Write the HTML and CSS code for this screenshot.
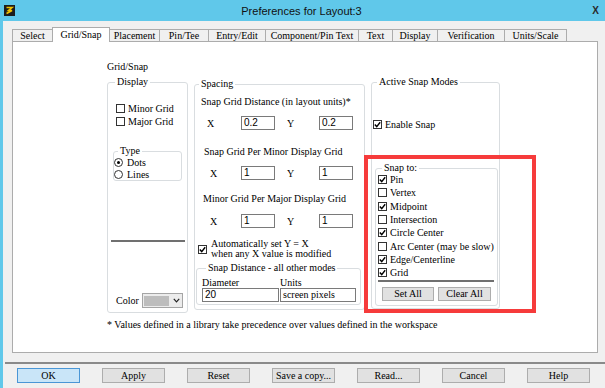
FILE: index.html
```html
<!DOCTYPE html>
<html lang="en">
<head>
    <meta charset="UTF-8">
    <title>Preferences for Layout:3</title>
    <link rel="stylesheet" href="styles.css">
</head>
<body>
<div class="window">
    <div class="titlebar">
        <svg class="app-icon" width="11" height="11" viewBox="0 0 11 11"><rect width="11" height="11" fill="#1c1c1c"/><path d="M2.5 2.5H8L4.5 5.5H8L2.5 8.5" fill="none" stroke="#f2c200" stroke-width="1.6"/></svg>
        <span class="title">Preferences for Layout:3</span>
        <span class="close">X</span>
    </div>

    <div class="client">
        <div class="tabs">
            <span class="tab">Select</span>
            <span class="tab current">Grid/Snap</span>
            <span class="tab">Placement</span>
            <span class="tab">Pin/Tee</span>
            <span class="tab">Entry/Edit</span>
            <span class="tab">Component/Pin Text</span>
            <span class="tab">Text</span>
            <span class="tab">Display</span>
            <span class="tab">Verification</span>
            <span class="tab">Units/Scale</span>
        </div>

        <div class="panel">
            <div class="page-title">Grid/Snap</div>

            <div class="groups">
                <!-- Display -->
                <fieldset class="display">
                    <legend>Display</legend>
                    <div class="grid-opts">
                        <div class="check-row"><span class="cb"></span>Minor Grid</div>
                        <div class="check-row"><span class="cb"></span>Major Grid</div>
                    </div>
                    <fieldset class="type">
                        <legend>Type</legend>
                        <div class="radio-row"><span class="rb on"></span>Dots</div>
                        <div class="radio-row"><span class="rb"></span>Lines</div>
                    </fieldset>
                    <div class="rule display-rule"></div>
                    <div class="color-row">
                        <span>Color</span>
                        <span class="combo"><span class="swatch"></span><svg width="7" height="5" viewBox="0 0 7 5"><path d="M0.8 0.8 3.5 3.8 6.2 0.8" fill="none" stroke="#222" stroke-width="1.2"/></svg></span>
                    </div>
                </fieldset>

                <!-- Spacing -->
                <fieldset class="spacing">
                    <legend>Spacing</legend>
                    <div class="hint h1">Snap Grid Distance (in layout units)*</div>
                    <div class="xy r1">
                        <span class="lbl">X</span><span class="field">0.2</span>
                        <span class="lbl y">Y</span><span class="field">0.2</span>
                    </div>
                    <div class="hint h2">Snap Grid Per Minor Display Grid</div>
                    <div class="xy r2">
                        <span class="lbl">X</span><span class="field">1</span>
                        <span class="lbl y">Y</span><span class="field">1</span>
                    </div>
                    <div class="hint h3">Minor Grid Per Major Display Grid</div>
                    <div class="xy r3">
                        <span class="lbl">X</span><span class="field">1</span>
                        <span class="lbl y">Y</span><span class="field">1</span>
                    </div>
                    <div class="auto">
                        <span class="cb on"><svg viewBox="0 0 7 7"><path d="M0.8 3.6 2.7 5.6 6.2 1.2"/></svg></span>
                        <span>Automatically set Y = X<br>when any X value is modified</span>
                    </div>
                    <fieldset class="snapdist">
                        <legend>Snap Distance - all other modes</legend>
                        <div class="cols">
                            <span class="cap">Diameter</span><span class="cap">Units</span>
                            <span class="field wide">20</span><span class="field wide serif">screen pixels</span>
                        </div>
                    </fieldset>
                </fieldset>

                <!-- Active Snap Modes -->
                <fieldset class="modes">
                    <legend>Active Snap Modes</legend>
                    <div class="check-row"><span class="cb on"><svg viewBox="0 0 7 7"><path d="M0.8 3.6 2.7 5.6 6.2 1.2"/></svg></span>Enable Snap</div>
                    <fieldset class="snap-to">
                        <legend>Snap to:</legend>
                        <div class="check-row"><span class="cb on"><svg viewBox="0 0 7 7"><path d="M0.8 3.6 2.7 5.6 6.2 1.2"/></svg></span>Pin</div>
                        <div class="check-row"><span class="cb"></span>Vertex</div>
                        <div class="check-row"><span class="cb on"><svg viewBox="0 0 7 7"><path d="M0.8 3.6 2.7 5.6 6.2 1.2"/></svg></span>Midpoint</div>
                        <div class="check-row"><span class="cb"></span>Intersection</div>
                        <div class="check-row"><span class="cb on"><svg viewBox="0 0 7 7"><path d="M0.8 3.6 2.7 5.6 6.2 1.2"/></svg></span>Circle Center</div>
                        <div class="check-row"><span class="cb"></span>Arc Center (may be slow)</div>
                        <div class="check-row"><span class="cb on"><svg viewBox="0 0 7 7"><path d="M0.8 3.6 2.7 5.6 6.2 1.2"/></svg></span>Edge/Centerline</div>
                        <div class="check-row"><span class="cb on"><svg viewBox="0 0 7 7"><path d="M0.8 3.6 2.7 5.6 6.2 1.2"/></svg></span>Grid</div>
                        <div class="rule snap-rule"></div>
                        <div class="snap-buttons">
                            <button class="btn set">Set All</button>
                            <button class="btn clear">Clear All</button>
                        </div>
                    </fieldset>
                </fieldset>
            </div>

            <p class="note">* Values defined in a library take precedence over values defined in the workspace</p>

            <!-- red highlight drawn over the dialog -->
            <div class="annotation"></div>
        </div>

        <div class="separator"></div>

        <div class="actions">
            <button class="btn big default">OK</button>
            <button class="btn big">Apply</button>
            <button class="btn big">Reset</button>
            <button class="btn big">Save a copy...</button>
            <button class="btn big">Read...</button>
            <button class="btn big">Cancel</button>
            <button class="btn big">Help</button>
        </div>
    </div>
</div>
</body>
</html>
```

FILE: styles.css
```css
* {box-sizing: border-box;}
body {margin: 0; background: #f0f0f0; font-family: "Liberation Serif", serif; font-size: 10px; color: #000;}
.window {width: 605px; height: 388px; background: #f0f0f0; border-left: 3px solid #60c8ea; overflow: hidden;}

/* title bar */
.titlebar {height: 21px; background: #60c8ea; display: grid; grid-template-columns: 1fr auto 1fr; align-items: center; padding: 0 6px 0 1px;}
.app-icon {display: block;}
.title {font-family: "Liberation Sans", Arial, sans-serif; font-size: 11px; color: #111;}
.close {justify-self: end; font-family: "Liberation Sans", Arial, sans-serif; font-weight: bold; font-size: 10px; color: #2a2a2a;}

.client {padding: 6px 0 0 9px;}

/* tabs */
.tabs {display: flex; align-items: flex-end; height: 14px;}
.tab {flex: none; height: 12px; border: 1px solid #acacac; border-bottom: 0; background: #f0f0f0; line-height: 11px; text-align: center; margin-right: -1px; white-space: nowrap;}
.tab.current {height: 15px; background: #fff; margin-bottom: -1px; position: relative; z-index: 1; line-height: 13px;}
.tab:nth-child(1) {width: 41px;}
.tab:nth-child(2) {width: 58px;}
.tab:nth-child(3) {width: 51px;}
.tab:nth-child(4) {width: 50px;}
.tab:nth-child(5) {width: 58px;}
.tab:nth-child(6) {width: 94px;}
.tab:nth-child(7) {width: 35px;}
.tab:nth-child(8) {width: 46px;}
.tab:nth-child(9) {width: 68px;}
.tab:nth-child(10) {width: 63px;}

/* page */
.panel {width: 586px; height: 312px; background: #fff; border: 1px solid #acacac; position: relative; padding: 19px 0 0 94px;}
.page-title {line-height: 12px;}
.groups {display: flex; align-items: flex-start; gap: 6px; margin-top: 4px;}

fieldset {margin: 0; padding: 0; border: 1px solid #d9dde0; border-radius: 3px; min-width: 0;}
legend {padding: 0 2px; margin-left: 4px; line-height: 10px; white-space: nowrap;}

.cb {flex: none; width: 9px; height: 9px; border: 1px solid #333; background: #fff; display: inline-flex; align-items: center; justify-content: center;}
.cb svg {width: 7px; height: 7px;}
.cb path {fill: none; stroke: #000; stroke-width: 1.4;}
.rb {flex: none; width: 9px; height: 9px; border: 1px solid #333; border-radius: 50%; background: #fff; display: inline-flex; align-items: center; justify-content: center;}
.rb.on::after {content: ""; width: 3px; height: 3px; border-radius: 50%; background: #000;}
.check-row {display: flex; align-items: center; gap: 3px; height: 13px; white-space: nowrap;}
.radio-row {display: flex; align-items: center; gap: 4px; height: 12px;}
.rule {height: 2px; background: #707070;}

/* display group */
.display {width: 81px; height: 236px; display: flex; flex-direction: column; padding: 15px 4px 4px 3px;}
.grid-opts {padding-left: 5px;}
.type {width: 69px; margin: 18px 0 0 2px;}
.display-rule {width: 74px; margin-top: 59px;}
.color-row {margin-top: auto; display: flex; align-items: center; justify-content: space-between; padding-left: 5px;}
.combo {width: 41px; height: 15px; border: 1px solid #a5a5a5; background: #ececec; display: flex; align-items: center; padding: 0 1px; gap: 4px;}
.swatch {width: 25px; height: 10px; background: #bdbdbd;}

/* spacing group */
.spacing {width: 171px; height: 231px; margin-top: 2px; padding-top: 7px;}
.hint {line-height: 12px; white-space: nowrap;}
.h1 {margin-left: 6px;}
.h2 {margin: 16px 0 0 9px;}
.h3 {margin: 13px 0 0 8px;}
.xy {display: flex; align-items: center; height: 14px; margin-top: 8px; padding-left: 12px;}
.r3 {margin-top: 9px;}
.xy .lbl {width: 34px;}
.xy .lbl.y {width: 32px; margin-left: 12px;}
.r2 .lbl:first-child, .r3 .lbl:first-child {padding-left: 3px;}
.field {width: 34px; height: 14px; border: 1px solid #7a7a7a; background: #fff; font-family: "Liberation Sans", Arial, sans-serif; font-size: 10px; line-height: 12px; padding-left: 2px; white-space: nowrap;}
.field.wide {width: auto;}
.field.serif {font-family: "Liberation Serif", serif;}
.auto {display: flex; align-items: center; gap: 4px; margin: 11px 0 0 3px; line-height: 10px; white-space: nowrap;}
.snapdist {width: 165px; margin: 4px 0 0 1px; padding: 5px 0 2px 5px;}
.cols {display: grid; grid-template-columns: 77px 76px; column-gap: 1px;}
.cap {line-height: 10px;}

/* active snap modes */
.modes {width: 129px; height: 232px; padding: 31px 0 0 1px;}
.snap-to {width: 123px; margin: 32px 0 0 2px; padding: 0 0 4px 2px;}
.snap-to .check-row {height: 13.3px;}
.snap-rule {width: 116px; margin-top: 1px;}
.snap-buttons {display: flex; gap: 4px; margin: 5px 0 0 4px;}

.btn {height: 14px; border: 1px solid #adadad; background: #e1e1e1; font-family: "Liberation Serif", serif; font-size: 10px; line-height: 12px; text-align: center; padding: 0; color: #000;}
.btn.set {width: 52px;}
.btn.clear {width: 53px;}

.note {margin: 6px 0 0; line-height: 12px;}

.annotation {position: absolute; left: 351px; top: 113px; width: 172px; height: 158px; border: 4px solid #f63b3b;}

/* bottom buttons */
.separator {height: 2px; background: #8a8a8a; margin: 9px 0 0 -7px;}
.actions {display: flex; gap: 22px; margin: 4px 0 0 5px;}
.btn.big {width: 63px; height: 15px;}
.btn.default {background: #c9e5f8; border-color: #4a96d6;}
```
